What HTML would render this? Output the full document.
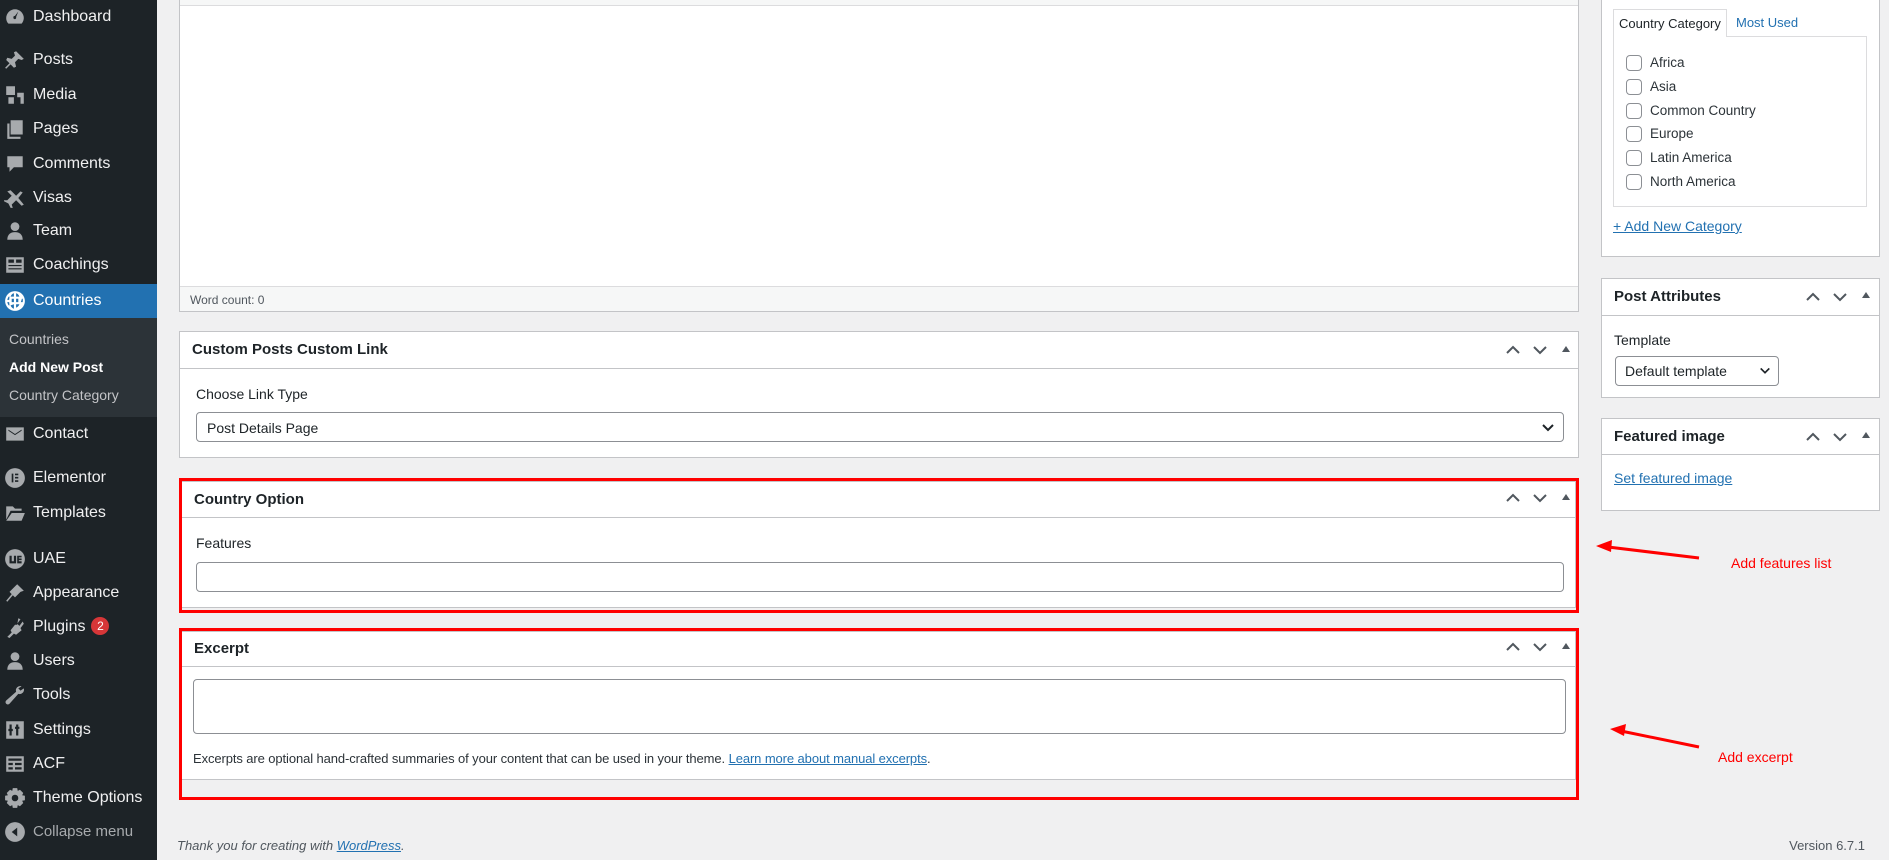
<!DOCTYPE html>
<html><head><meta charset="utf-8">
<style>
*{box-sizing:border-box;margin:0;padding:0}
body{width:1889px;height:860px;overflow:hidden;background:#f0f0f1;font-family:"Liberation Sans",sans-serif;color:#1d2327;position:relative;font-size:15px}
.a{position:absolute}
#side{left:0;top:0;width:157px;height:860px;background:#1d2327}
.mi{position:absolute;left:0;width:157px;height:34px;color:#f0f0f1;font-size:16px;line-height:34px;padding-left:33px}
.mi svg{position:absolute;left:4px;top:6px;width:22px;height:22px;fill:#a7aaad}
.sub{position:absolute;left:9px;font-size:14px;color:#c3c4c7}
.box{position:absolute;background:#fff;border:1px solid #c3c4c7}
.hd{position:absolute;left:0;right:0;top:0;border-bottom:1px solid #c3c4c7;font-weight:bold;font-size:15px;padding-left:12px}
.red{position:absolute;border:3px solid #f00}
.inp{position:absolute;background:#fff;border:1px solid #8c8f94;border-radius:4px}
a{color:#2271b1;text-decoration:underline}
.cb{position:absolute;left:1626px;width:16px;height:16px;border:1px solid #8c8f94;border-radius:4px;background:#fff}
.cl{position:absolute;left:1650px;font-size:13.5px;color:#2c3338}
</style></head><body>
<div id="side" class="a">
<div class="mi" style="top:0"><svg viewBox="0 0 20 20"><path d="M10 3a8 8 0 0 0-8 8c0 2 .7 3.7 2 5h12a8 8 0 0 0 2-5 8 8 0 0 0-8-8zm0 9a1.5 1.5 0 1 1 0-3l3-4-2 5a1.5 1.5 0 0 1-1 2z"/></svg>Dashboard</div>
<div class="mi" style="top:43px"><svg viewBox="0 0 20 20"><path d="M11 2l7 7-2 1-3-1-3 3 1 4-2 1-3-3-4 4-1-1 4-4-3-3 1-2 4 1 3-3-1-3z"/></svg>Posts</div>
<div class="mi" style="top:78px"><svg viewBox="0 0 20 20"><path d="M2 2h8v8H2zM12 8h6v10h-3v-6h-3zM4 12h5v6H4z"/></svg>Media</div>
<div class="mi" style="top:112px"><svg viewBox="0 0 20 20"><path d="M6 2h11v13H6zM3 5h2v12h10v2H3z"/></svg>Pages</div>
<div class="mi" style="top:147px"><svg viewBox="0 0 20 20"><path d="M3 3h14v10h-8l-4 4v-4H3z"/></svg>Comments</div>
<div class="mi" style="top:181px"><svg viewBox="0 0 20 20"><path d="M3 4l3-1 5 5 4-4 2 1-4 5 5 6-2 1-5-5-4 4 1 3-2 0-2-4-4-2v-1l3 0 4-4z"/></svg>Visas</div>
<div class="mi" style="top:214px"><svg viewBox="0 0 20 20"><circle cx="10" cy="6" r="4"/><path d="M3 18c0-5 3-7 7-7s7 2 7 7z"/></svg>Team</div>
<div class="mi" style="top:248px"><svg viewBox="0 0 20 20"><path d="M2 3h16v14H2zm2 2v3h5V5zm0 5v1h12v-1zm0 3v1h12v-1zm7-8v3h5V5z"/></svg>Coachings</div>
<div class="a" style="left:0;top:284px;width:157px;height:34px;background:#2271b1"></div>
<div class="mi" style="top:284px;color:#fff"><svg viewBox="0 0 20 20" style="fill:#fff"><path d="M10 1a9 9 0 1 0 0 18 9 9 0 0 0 0-18zm-1 2v3H6c.6-1.6 1.6-2.7 3-3zm2 0c1.4.3 2.4 1.4 3 3h-3zM4.3 6H5l-.3 3H3c.2-1 .6-2.1 1.3-3zM7 8h2v3H7zm4 0h2v3h-2zm-8 3h1.7l.3 3H4.3C3.6 13 3.2 12 3 11zm13.3-3H17c.2 1 .2 2 0 3h-1.7zM9 13v4c-1.4-.3-2.4-1.4-3-3zm2 0h3c-.6 1.6-1.6 2.7-3 3z"/></svg>Countries</div>
<div class="a" style="left:149px;top:293px;width:0;height:0;border:8px solid transparent;border-right-color:#f0f0f1"></div>
<div class="a" style="left:0;top:318px;width:157px;height:99px;background:#2c3338"></div>
<div class="sub" style="top:331px">Countries</div>
<div class="sub" style="top:359px;color:#fff;font-weight:bold">Add New Post</div>
<div class="sub" style="top:387px">Country Category</div>
<div class="mi" style="top:417px"><svg viewBox="0 0 20 20"><path d="M2 4h16v12H2zm2 2v1l6 4 6-4V6l-6 4z"/></svg>Contact</div>
<div class="mi" style="top:461px"><svg viewBox="0 0 20 20"><path d="M10 1a9 9 0 1 0 0 18 9 9 0 0 0 0-18zM7 6h1.5v8H7zm3 0h3v1.5h-3zm0 3h3v1.5h-3zm0 3h3v1.5h-3z"/></svg>Elementor</div>
<div class="mi" style="top:496px"><svg viewBox="0 0 20 20"><path d="M2 4h6l2 2h6v2H6l-4 8zm5 6h12l-3 7H2z"/></svg>Templates</div>
<div class="mi" style="top:542px"><svg viewBox="0 0 20 20"><path d="M10 1a9 9 0 1 0 0 18 9 9 0 0 0 0-18zM5 7h2v5h2V7h2v7H5zm7 0h4v1.5h-2.5v1h2.5V11h-2.5v1H16v2h-4z"/></svg>UAE</div>
<div class="mi" style="top:576px"><svg viewBox="0 0 20 20"><path d="M12 2l6 6-3 1-5 5-2-2-5 6-1-1 5-6-2-2 5-5z"/></svg>Appearance</div>
<div class="mi" style="top:610px"><svg viewBox="0 0 20 20"><path d="M13 2l2 1-3 4 2 2 3-4 1 2-3 4 1 2-5 4-2-1-4 4-2-1 4-4-1-2 4-5 2 0z"/></svg>Plugins<span style="display:inline-block;margin-left:6px;width:18px;height:18px;border-radius:9px;background:#d63638;color:#fff;font-size:12px;line-height:18px;text-align:center;vertical-align:1px">2</span></div>
<div class="mi" style="top:644px"><svg viewBox="0 0 20 20"><circle cx="10" cy="6" r="4"/><path d="M3 18c0-5 3-7 7-7s7 2 7 7z"/></svg>Users</div>
<div class="mi" style="top:678px"><svg viewBox="0 0 20 20"><path d="M16 2a4 4 0 0 0-5 5L2 15a2 2 0 0 0 3 3l8-9a4 4 0 0 0 5-5l-3 2-2-2z"/></svg>Tools</div>
<div class="mi" style="top:713px"><svg viewBox="0 0 20 20"><path d="M2 2h16v16H2zm3 3v4H4v2h1v4h2v-4h1V9H7V5zm6 0v2h-1v2h1v6h2V9h1V7h-1V5z"/></svg>Settings</div>
<div class="mi" style="top:747px"><svg viewBox="0 0 20 20"><path d="M2 3h16v14H2zm2 2v2h12V5zm0 4v2h4V9zm6 0v2h6V9zm-6 4v2h4v-2zm6 0v2h6v-2z"/></svg>ACF</div>
<div class="mi" style="top:781px"><svg viewBox="0 0 20 20"><path d="M8 1h4l.5 2.5 2-1 3 3-1 2L19 8v4l-2.5.5 1 2-3 3-2-1L12 19H8l-.5-2.5-2 1-3-3 1-2L1 12V8l2.5-.5-1-2 3-3 2 1zm2 6a3 3 0 1 0 0 6 3 3 0 0 0 0-6z"/></svg>Theme Options</div>
<div class="mi" style="top:815px;color:#a7aaad;font-size:15px"><svg viewBox="0 0 20 20"><path d="M10 1a9 9 0 1 0 0 18 9 9 0 0 0 0-18zm2 5v8L7 10z"/></svg>Collapse menu</div>
</div>

<div class="box" style="left:179px;top:-2px;width:1400px;height:314px;"></div>
<div class="a" style="left:180px;top:0;width:1398px;height:6px;background:#f6f7f7;border-bottom:1px solid #dcdcde"></div>
<div class="a" style="left:180px;top:286px;width:1398px;height:25px;background:#f6f7f7;border-top:1px solid #dcdcde;font-size:12px;color:#50575e;padding:6px 10px">Word count: 0</div>

<div class="box" style="left:179px;top:331px;width:1400px;height:127px">
<div class="hd" style="height:37px;line-height:36px">Custom Posts Custom Link</div>
<div class="a" style="left:16px;top:54px;font-size:14px">Choose Link Type</div>
<div class="inp" style="left:16px;top:80px;width:1368px;height:30px;font-size:14px;padding:7px 10px">Post Details Page
<svg class="a" style="right:8px;top:8px" width="14" height="14" viewBox="0 0 14 14"><path d="M2 4l5 5 5-5" stroke="#1d2327" stroke-width="2" fill="none"/></svg></div>
</div>

<div class="box" style="left:181px;top:481px;width:1395px;height:127px">
<div class="hd" style="height:36px;line-height:35px">Country Option</div>
<div class="a" style="left:14px;top:53px;font-size:14px">Features</div>
<div class="inp" style="left:14px;top:80px;width:1368px;height:30px"></div>
</div>
<div class="red" style="left:179px;top:478px;width:1400px;height:135px"></div>

<div class="box" style="left:181px;top:631px;width:1395px;height:149px">
<div class="hd" style="height:35px;line-height:34px">Excerpt</div>
<div class="inp" style="left:11px;top:47px;width:1373px;height:55px;border-radius:4px"></div>
<div class="a" style="left:11px;top:119px;font-size:13px;color:#2c3338;white-space:nowrap;letter-spacing:-0.1px">Excerpts are optional hand-crafted summaries of your content that can be used in your theme. <a>Learn more about manual excerpts</a>.</div>
</div>
<div class="red" style="left:179px;top:628px;width:1400px;height:172px"></div>

<svg class="a" style="left:1500px;top:338px" width="80" height="500" viewBox="0 0 80 500">
<g fill="none" stroke="#50575e" stroke-width="2">
<path d="M7 15l6-6 6 6M34 9l6 6 6-6"/>
<path d="M7 163l6-6 6 6M34 157l6 6 6-6"/>
<path d="M7 312l6-6 6 6M34 306l6 6 6-6"/></g>
<g fill="#50575e"><path d="M62 14l4-6 4 6z"/><path d="M62 162l4-6 4 6z"/><path d="M62 311l4-6 4 6z"/></g>
</svg>

<svg class="a" style="left:1590px;top:530px" width="299" height="240">
<g stroke="#f00" stroke-width="3" fill="#f00">
<line x1="109" y1="28" x2="18" y2="17"/><path d="M6 16l16-6-1 12z" stroke="none"/>
<line x1="109" y1="217" x2="31" y2="201"/><path d="M20 199l16-5-2 12z" stroke="none"/>
</g></svg>
<div class="a" style="left:1731px;top:555px;color:#f00;font-size:14px">Add features list</div>
<div class="a" style="left:1718px;top:749px;color:#f00;font-size:14px">Add excerpt</div>

<div class="a" style="left:177px;top:838px;font-size:13px;font-style:italic;color:#50575e">Thank you for creating with <a>WordPress</a>.</div>
<div class="a" style="right:24px;top:838px;font-size:13px;color:#50575e">Version 6.7.1</div>

<div class="box" style="left:1601px;top:-2px;width:279px;height:259px"></div>
<div class="a" style="left:1613px;top:36px;width:254px;height:171px;border:1px solid #dcdcde;background:#fff"></div>
<div class="a" style="left:1613px;top:9px;width:114px;height:28px;border:1px solid #dcdcde;border-bottom:none;background:#fff;font-size:13px;padding:6px 5px">Country Category</div>
<div class="a" style="left:1736px;top:15px;font-size:13px;color:#2271b1">Most Used</div>
<div class="cb" style="top:55px"></div><div class="cl" style="top:55px">Africa</div>
<div class="cb" style="top:79px"></div><div class="cl" style="top:79px">Asia</div>
<div class="cb" style="top:103px"></div><div class="cl" style="top:103px">Common Country</div>
<div class="cb" style="top:126px"></div><div class="cl" style="top:126px">Europe</div>
<div class="cb" style="top:150px"></div><div class="cl" style="top:150px">Latin America</div>
<div class="cb" style="top:174px"></div><div class="cl" style="top:174px">North America</div>
<a class="a" style="left:1613px;top:218px;font-size:14px">+ Add New Category</a>

<div class="box" style="left:1601px;top:278px;width:279px;height:120px">
<div class="hd" style="height:37px;line-height:36px">Post Attributes</div>
<div class="a" style="left:12px;top:53px;font-size:14px">Template</div>
<div class="inp" style="left:13px;top:77px;width:164px;height:30px;font-size:14px;padding:6px 9px">Default template
<svg class="a" style="right:7px;top:8px" width="12" height="12" viewBox="0 0 14 14"><path d="M2 4l5 5 5-5" stroke="#1d2327" stroke-width="2" fill="none"/></svg></div>
</div>
<div class="box" style="left:1601px;top:418px;width:279px;height:93px">
<div class="hd" style="height:36px;line-height:35px">Featured image</div>
<a class="a" style="left:12px;top:51px;font-size:14px">Set featured image</a>
</div>
<svg class="a" style="left:1805px;top:283px" width="80" height="180" viewBox="0 0 80 180">
<g fill="none" stroke="#50575e" stroke-width="2">
<path d="M2 17l6-6 6 6M29 11l6 6 6-6"/>
<path d="M2 157l6-6 6 6M29 151l6 6 6-6"/></g>
<g fill="#50575e"><path d="M57 15l4-6 4 6z"/><path d="M57 155l4-6 4 6z"/></g>
</svg>
</body></html>
